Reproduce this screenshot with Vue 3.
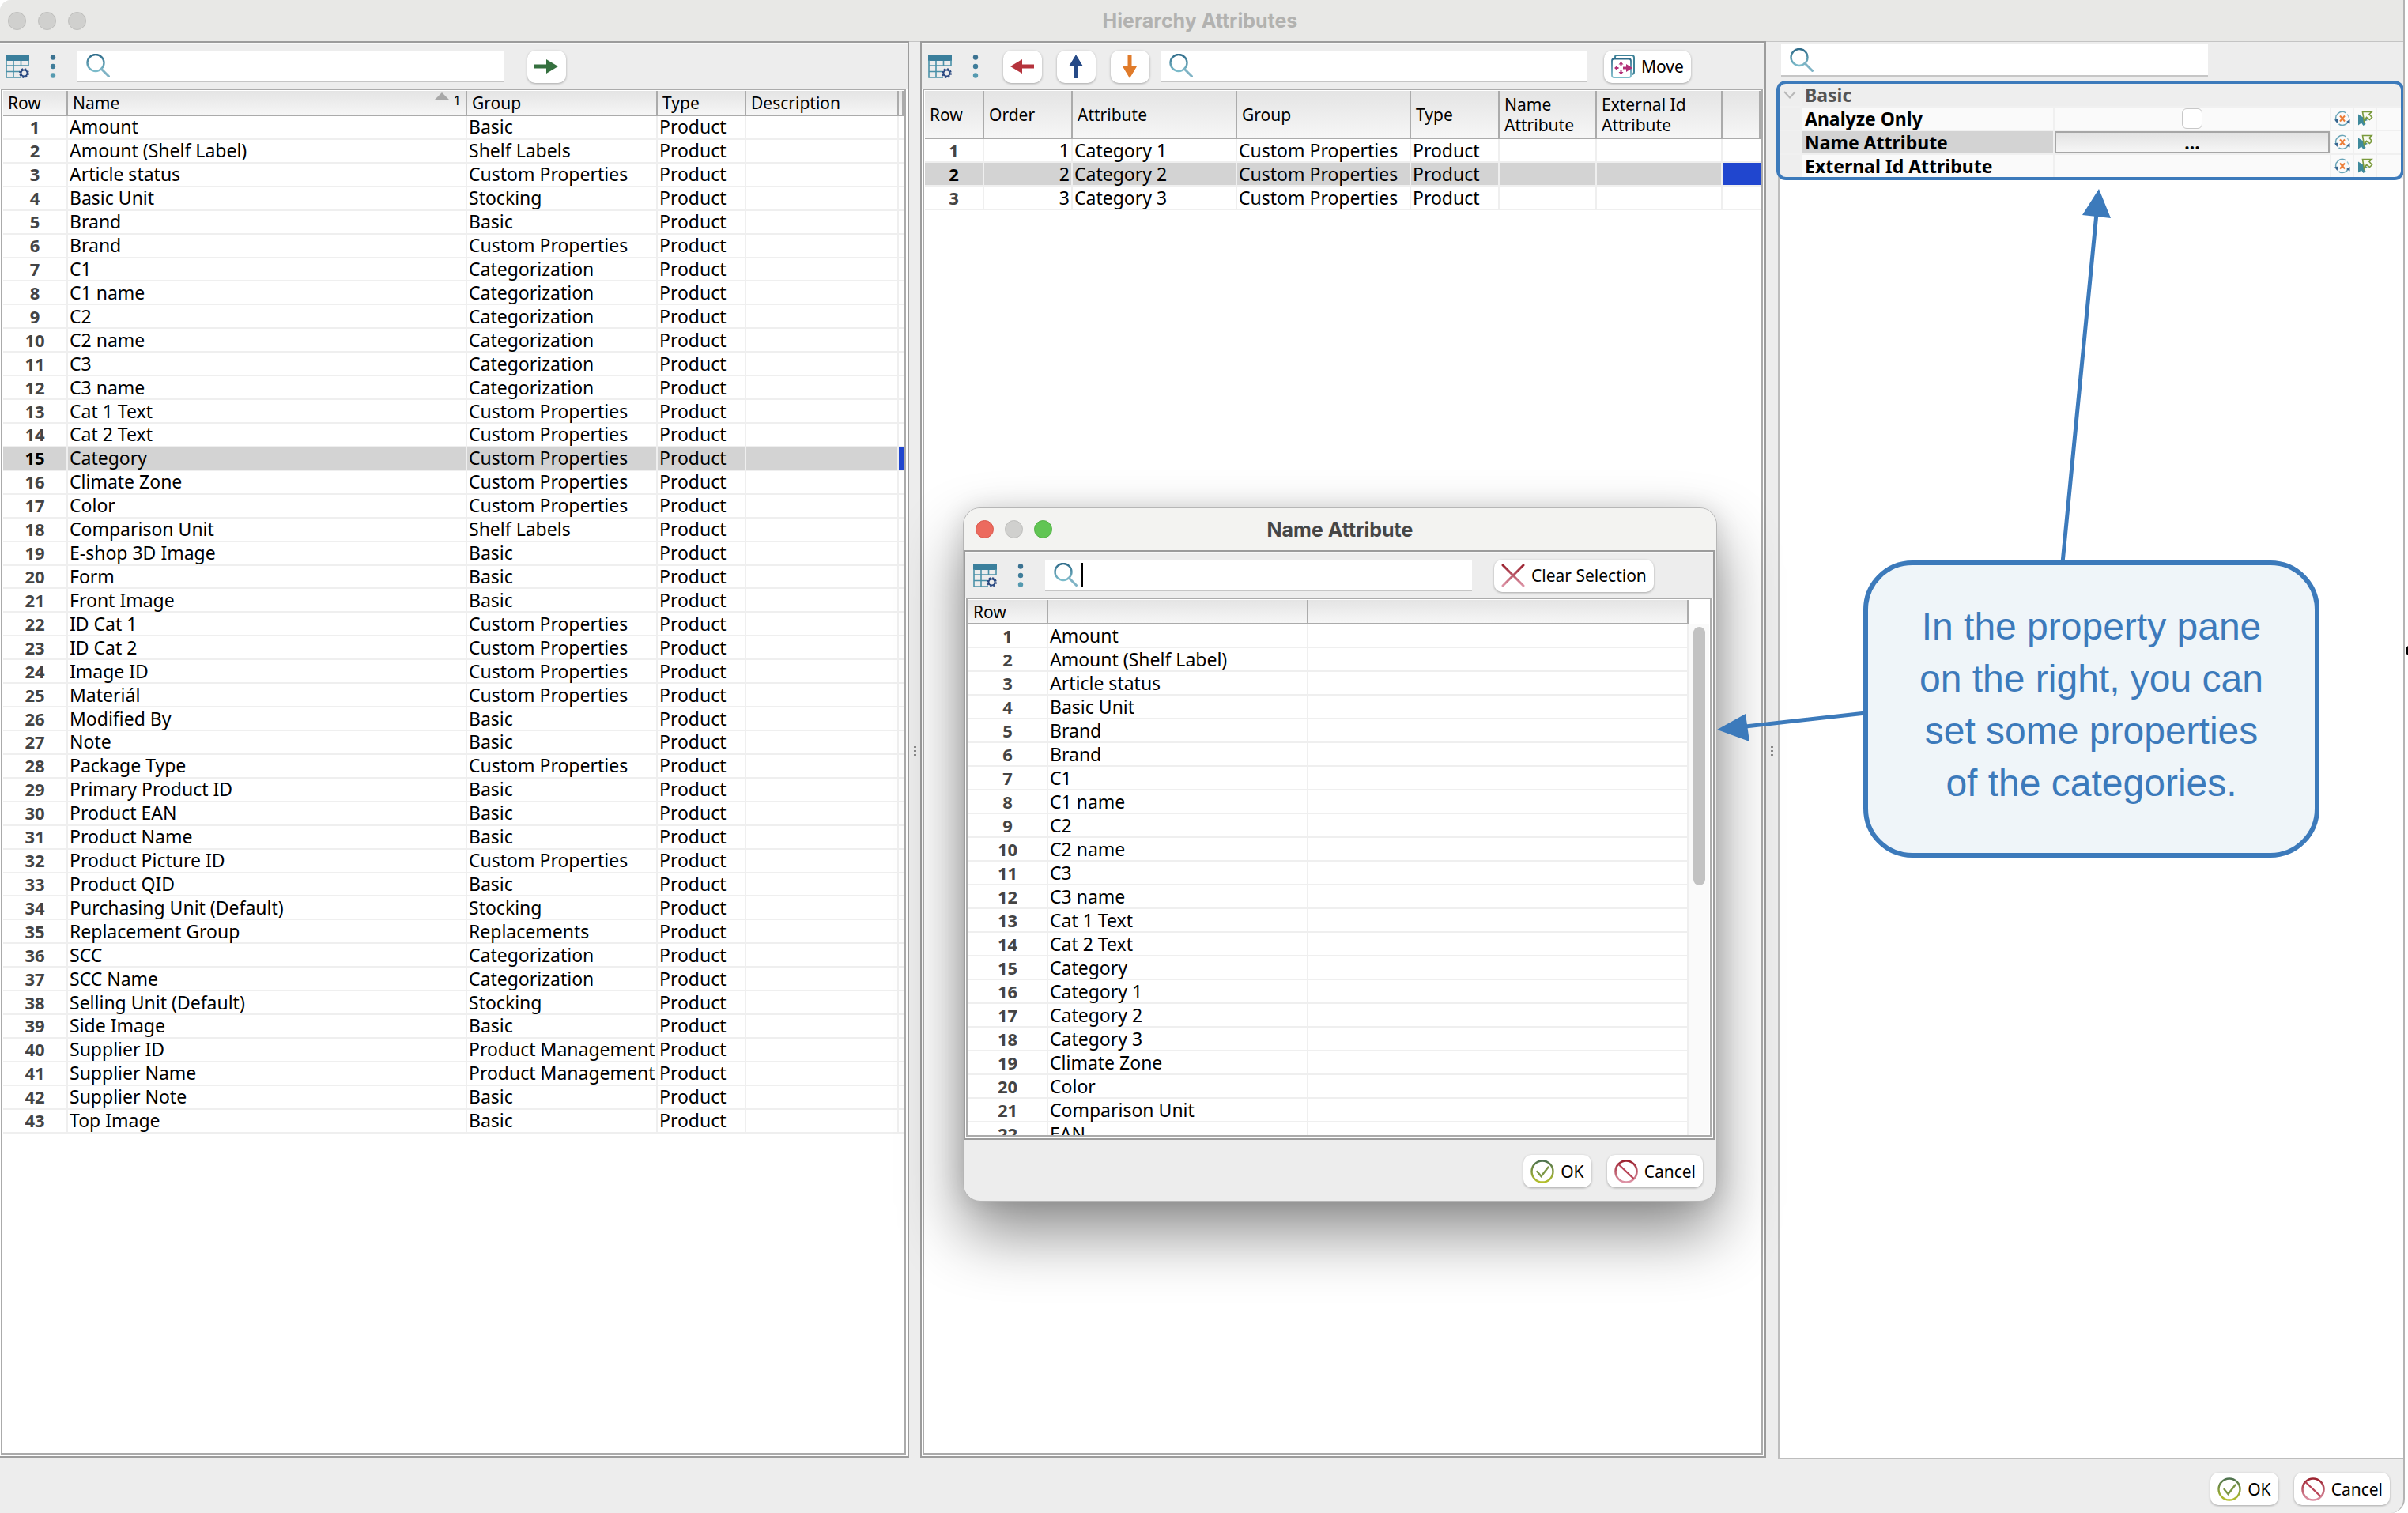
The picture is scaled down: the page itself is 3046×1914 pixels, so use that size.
<script setup>
import { ref } from "vue";

const P = "Product";
const attributes = [
  ["Amount", "Basic"],
  ["Amount (Shelf Label)", "Shelf Labels"],
  ["Article status", "Custom Properties"],
  ["Basic Unit", "Stocking"],
  ["Brand", "Basic"],
  ["Brand", "Custom Properties"],
  ["C1", "Categorization"],
  ["C1 name", "Categorization"],
  ["C2", "Categorization"],
  ["C2 name", "Categorization"],
  ["C3", "Categorization"],
  ["C3 name", "Categorization"],
  ["Cat 1 Text", "Custom Properties"],
  ["Cat 2 Text", "Custom Properties"],
  ["Category", "Custom Properties"],
  ["Climate Zone", "Custom Properties"],
  ["Color", "Custom Properties"],
  ["Comparison Unit", "Shelf Labels"],
  ["E-shop 3D Image", "Basic"],
  ["Form", "Basic"],
  ["Front Image", "Basic"],
  ["ID Cat 1", "Custom Properties"],
  ["ID Cat 2", "Custom Properties"],
  ["Image ID", "Custom Properties"],
  ["Materiál", "Custom Properties"],
  ["Modified By", "Basic"],
  ["Note", "Basic"],
  ["Package Type", "Custom Properties"],
  ["Primary Product ID", "Basic"],
  ["Product EAN", "Basic"],
  ["Product Name", "Basic"],
  ["Product Picture ID", "Custom Properties"],
  ["Product QID", "Basic"],
  ["Purchasing Unit (Default)", "Stocking"],
  ["Replacement Group", "Replacements"],
  ["SCC", "Categorization"],
  ["SCC Name", "Categorization"],
  ["Selling Unit (Default)", "Stocking"],
  ["Side Image", "Basic"],
  ["Supplier ID", "Product Management"],
  ["Supplier Name", "Product Management"],
  ["Supplier Note", "Basic"],
  ["Top Image", "Basic"],
];

const categories = ["Category 1", "Category 2", "Category 3"];

const choices = [
  "Amount",
  "Amount (Shelf Label)",
  "Article status",
  "Basic Unit",
  "Brand",
  "Brand",
  "C1",
  "C1 name",
  "C2",
  "C2 name",
  "C3",
  "C3 name",
  "Cat 1 Text",
  "Cat 2 Text",
  "Category",
  "Category 1",
  "Category 2",
  "Category 3",
  "Climate Zone",
  "Color",
  "Comparison Unit",
  "EAN",
];

const selectedAttribute = ref(14);
const selectedCategory = ref(1);
const analyzeOnly = ref(false);
</script>

<template>
  <svg class="sprite" aria-hidden="true">
    <defs>
      <linearGradient id="g-teal" x1="0" y1="0" x2="0" y2="1">
        <stop offset="0" stop-color="#2f6c8a" />
        <stop offset="1" stop-color="#7dbccb" />
      </linearGradient>
      <linearGradient id="g-green" x1="0" y1="0" x2="0" y2="1">
        <stop offset="0" stop-color="#4f7350" />
        <stop offset="1" stop-color="#b4bf2c" />
      </linearGradient>
      <linearGradient id="g-red" x1="0" y1="0" x2="0" y2="1">
        <stop offset="0" stop-color="#9c2330" />
        <stop offset="1" stop-color="#dd93a6" />
      </linearGradient>
    </defs>
    <symbol id="i-table" viewBox="0 0 30 30">
      <path d="M0 0H30V8H0Z" fill="#3b7f9c" />
      <path d="M1 7V29H19M1 14H29V7M1 21.500H18M10 8V29M19.500 8V15" fill="none" stroke="#4b91a8" stroke-width="1.600" />
      <circle cx="23.500" cy="23.500" r="4" fill="#ededed" stroke="#2b4a82" stroke-width="2" />
      <circle cx="23.500" cy="23.500" r="5.500" fill="none" stroke="#2b4a82" stroke-width="1.800" stroke-dasharray="2.200 2.120" />
    </symbol>
    <symbol id="i-dots" viewBox="0 0 14 30">
      <circle cx="7" cy="3.500" r="3.200" fill="#3b7291" />
      <circle cx="7" cy="15" r="3.200" fill="#3f7d9a" />
      <circle cx="7" cy="26.500" r="3.200" fill="#559ab0" />
    </symbol>
    <symbol id="i-search" viewBox="0 0 30 30">
      <circle cx="12" cy="11.500" r="10.500" fill="none" stroke="url(#g-teal)" stroke-width="2.400" />
      <path d="M19 19L28.500 28.500" stroke="#7fb3c5" stroke-width="3" stroke-linecap="round" />
    </symbol>
    <symbol id="i-arrow" viewBox="0 0 30 30">
      <path d="M0 12.500H15V6L30 15L15 24V17.500H0Z" />
    </symbol>
    <symbol id="i-move" viewBox="0 0 30 30">
      <path d="M5 5V3Q5 1 7 1H26Q29 1 29 4V22Q29 25 26 25" fill="none" stroke="#3f8399" stroke-width="2" />
      <rect x="1" y="5.500" width="24" height="23.500" rx="2.500" fill="#fff" stroke="url(#g-teal)" stroke-width="1.800" />
      <path d="M15 15.500H19V12L27 17L19 22V18.500H15Z M12.500 9L15.500 12.500H13.500V14.500H11.500V12.500H9.500Z M4 17L7.500 14V16H9.500V18H7.500V20Z M12.500 25.500L9.500 22H11.500V20H13.500V22H15.500Z" fill="#b23078" />
    </symbol>
    <symbol id="i-cross" viewBox="0 0 30 30">
      <path d="M2 2L28 28M28 2L2 28" fill="none" stroke="url(#g-red)" stroke-width="3" stroke-linecap="round" />
    </symbol>
    <symbol id="i-ok" viewBox="0 0 30 30">
      <circle cx="15" cy="15" r="13.500" fill="none" stroke="url(#g-green)" stroke-width="2.400" />
      <path d="M8.500 15L13.500 21L22.500 9.500" fill="none" stroke="#7c9645" stroke-width="2.400" stroke-linecap="round" />
    </symbol>
    <symbol id="i-cancel" viewBox="0 0 30 30">
      <circle cx="15" cy="15" r="13.500" fill="none" stroke="url(#g-red)" stroke-width="2.600" />
      <path d="M5.500 6L24.500 24" stroke="#b84356" stroke-width="2.400" />
    </symbol>
    <symbol id="i-reset" viewBox="0 0 20 20">
      <path d="M2.500 13A8.200 8.200 0 0 1 14.500 2.800" fill="none" stroke="#6aa5b8" stroke-width="1.500" />
      <path d="M5.500 17A8.200 8.200 0 0 0 17.500 13.500" fill="none" stroke="#6aa5b8" stroke-width="1.500" />
      <path d="M16 4.500A8.200 8.200 0 0 1 18.200 9" fill="none" stroke="#9cc3cf" stroke-width="1.200" />
      <path d="M0 11.500L5 10.500L3.500 16ZM15 14L19.500 11L19.500 16.500Z" fill="#35658f" />
      <path d="M7 6.500L13 13.500M13 6.500L7 13.500" stroke="#ec7d37" stroke-width="2" />
    </symbol>
    <symbol id="i-inherit" viewBox="0 0 20 20">
      <path d="M1 4.500V18.500L5 15.500L7.500 19L10.500 17L9 13.500L13 12Z" fill="#3f8a9c" />
      <path d="M6.500 1.500H18L15 4.500L18.500 8.500L15.500 11.500L11.500 8.500L8.500 13.500Z" fill="#f8faf0" stroke="#7a9a3c" stroke-width="1.600" />
    </symbol>
  </svg>

  <main class="app">
    <section class="window">
      <header class="titlebar">
        <span class="lights"><i></i><i></i><i></i></span>
        <h1>Hierarchy Attributes</h1>
      </header>

      <div class="panes">
        <section class="pane pane--first">
          <div class="toolbar">
            <button class="tool" aria-label="Table settings"><svg><use href="#i-table" /></svg></button>
            <button class="tool tool--dots" aria-label="More"><svg><use href="#i-dots" /></svg></button>
            <label class="search">
              <svg><use href="#i-search" /></svg>
              <input type="text" aria-label="Search attributes" />
            </label>
            <button class="btn btn--icon btn--add" aria-label="Add"><svg class="green"><use href="#i-arrow" /></svg></button>
          </div>
          <div class="box">
            <table class="grid grid--attributes">
              <colgroup>
                <col class="w-row" /><col class="w-name" /><col class="w-group" /><col class="w-type" /><col class="w-desc" /><col />
              </colgroup>
              <thead>
                <tr>
                  <th>Row</th>
                  <th>
                    <div class="sorted">Name <span><b></b><small>1</small></span></div>
                  </th>
                  <th>Group</th>
                  <th>Type</th>
                  <th>Description</th>
                  <th></th>
                </tr>
              </thead>
              <tbody>
                <tr
                  v-for="([name, group], i) in attributes"
                  :key="i"
                  :class="{ selected: i === selectedAttribute }"
                  @click="selectedAttribute = i"
                >
                  <td class="num">{{ i + 1 }}</td>
                  <td>{{ name }}</td>
                  <td>{{ group }}</td>
                  <td>{{ P }}</td>
                  <td></td>
                  <td class="mark"></td>
                </tr>
              </tbody>
            </table>
          </div>
        </section>

        <div class="splitter"><i></i></div>

        <section class="pane">
          <div class="toolbar">
            <button class="tool" aria-label="Table settings"><svg><use href="#i-table" /></svg></button>
            <button class="tool tool--dots" aria-label="More"><svg><use href="#i-dots" /></svg></button>
            <div class="moves">
              <button class="btn btn--icon" aria-label="Remove"><svg class="red"><use href="#i-arrow" /></svg></button>
              <button class="btn btn--icon" aria-label="Move up"><svg class="blue"><use href="#i-arrow" /></svg></button>
              <button class="btn btn--icon" aria-label="Move down"><svg class="orange"><use href="#i-arrow" /></svg></button>
            </div>
            <label class="search">
              <svg><use href="#i-search" /></svg>
              <input type="text" aria-label="Search categories" />
            </label>
            <button class="btn btn--move"><svg><use href="#i-move" /></svg>Move</button>
          </div>
          <div class="box">
            <table class="grid grid--categories">
              <colgroup>
                <col class="w-row" /><col class="w-order" /><col class="w-attr" /><col class="w-group" /><col class="w-type" /><col class="w-nameattr" /><col class="w-ext" /><col />
              </colgroup>
              <thead>
                <tr>
                  <th>Row</th>
                  <th>Order</th>
                  <th>Attribute</th>
                  <th>Group</th>
                  <th>Type</th>
                  <th>Name<br />Attribute</th>
                  <th>External Id<br />Attribute</th>
                  <th></th>
                </tr>
              </thead>
              <tbody>
                <tr
                  v-for="(name, i) in categories"
                  :key="name"
                  :class="{ selected: i === selectedCategory }"
                  @click="selectedCategory = i"
                >
                  <td class="num">{{ i + 1 }}</td>
                  <td class="order">{{ i + 1 }}</td>
                  <td>{{ name }}</td>
                  <td>Custom Properties</td>
                  <td>{{ P }}</td>
                  <td></td>
                  <td></td>
                  <td class="mark"></td>
                </tr>
              </tbody>
            </table>
          </div>
        </section>

        <div class="splitter"><i></i></div>

        <section class="props">
          <label class="search">
            <svg><use href="#i-search" /></svg>
            <input type="text" aria-label="Search properties" />
          </label>
          <div class="props__body">
            <table class="props__table">
              <colgroup>
                <col class="w-gutter" /><col class="w-prop" /><col class="w-value" /><col class="w-act" /><col class="w-act" /><col />
              </colgroup>
              <tbody>
                <tr class="props__group">
                  <td>
                    <svg class="chevron" viewBox="0 0 16 10"><path d="M1 1L8 8.500L15 1" /></svg>
                  </td>
                  <th colspan="5">Basic</th>
                </tr>
                <tr>
                  <td></td>
                  <th><label for="analyze-only">Analyze Only</label></th>
                  <td class="value"><input id="analyze-only" v-model="analyzeOnly" type="checkbox" /></td>
                  <td><button class="act" aria-label="Reset"><svg><use href="#i-reset" /></svg></button></td>
                  <td><button class="act" aria-label="Inherit"><svg><use href="#i-inherit" /></svg></button></td>
                  <td></td>
                </tr>
                <tr class="active">
                  <td></td>
                  <th>Name Attribute</th>
                  <td class="value"><button class="browse" aria-label="Choose name attribute">...</button></td>
                  <td><button class="act" aria-label="Reset"><svg><use href="#i-reset" /></svg></button></td>
                  <td><button class="act" aria-label="Inherit"><svg><use href="#i-inherit" /></svg></button></td>
                  <td></td>
                </tr>
                <tr>
                  <td></td>
                  <th>External Id Attribute</th>
                  <td></td>
                  <td><button class="act" aria-label="Reset"><svg><use href="#i-reset" /></svg></button></td>
                  <td><button class="act" aria-label="Inherit"><svg><use href="#i-inherit" /></svg></button></td>
                  <td></td>
                </tr>
              </tbody>
            </table>
            <div class="highlight"></div>
          </div>
        </section>
      </div>

      <footer class="actions">
        <button class="btn"><svg><use href="#i-ok" /></svg>OK</button>
        <button class="btn"><svg><use href="#i-cancel" /></svg>Cancel</button>
      </footer>
    </section>

    <section class="dialog" role="dialog" aria-labelledby="dialog-title">
      <header class="titlebar">
        <span class="lights"><i></i><i></i><i></i></span>
        <h2 id="dialog-title">Name Attribute</h2>
      </header>
      <div class="pane pane--dialog">
        <div class="toolbar">
          <button class="tool" aria-label="Table settings"><svg><use href="#i-table" /></svg></button>
          <button class="tool tool--dots" aria-label="More"><svg><use href="#i-dots" /></svg></button>
          <label class="search">
            <svg><use href="#i-search" /></svg>
            <span class="caret"></span>
            <input type="text" aria-label="Search values" />
          </label>
          <button class="btn btn--clear"><svg><use href="#i-cross" /></svg>Clear Selection</button>
        </div>
        <div class="box box--scroll">
          <table class="grid grid--choices">
            <colgroup>
              <col class="w-row" /><col class="w-choice" /><col />
            </colgroup>
            <thead>
              <tr>
                <th>Row</th>
                <th></th>
                <th></th>
              </tr>
            </thead>
            <tbody>
              <tr v-for="(name, i) in choices" :key="i">
                <td class="num">{{ i + 1 }}</td>
                <td>{{ name }}</td>
                <td></td>
              </tr>
            </tbody>
          </table>
          <div class="scroll"><span></span></div>
        </div>
      </div>
      <footer class="actions">
        <button class="btn"><svg><use href="#i-ok" /></svg>OK</button>
        <button class="btn"><svg><use href="#i-cancel" /></svg>Cancel</button>
      </footer>
    </section>

    <svg class="arrows" aria-hidden="true">
      <path d="M2609 712L2652 270M2360 902L2208 919" />
      <path class="head" d="M2655 239L2634 272L2670 276ZM2172 923L2208 903L2213 938Z" />
      <path class="speck" d="M3046 817Q3043 819 3043 823Q3043 827 3046 829Z" />
    </svg>
    <aside class="callout">
      In the property pane<br />on the right, you can<br />set some properties<br />of the categories.
    </aside>
  </main>
</template>

<style>
body {
  margin: 0;
  background: #fff;
}
</style>

<style scoped>
.sprite {
  position: absolute;
  width: 0;
  height: 0;
}

.app {
  position: relative;
  min-height: 100vh;
  box-sizing: border-box;
  padding-right: 4px;
  display: flex;
  overflow: hidden;
  color: #000;
  font: 21px/26px "Noto Sans", "Open Sans", sans-serif;
}
.app *,
.app *::before {
  box-sizing: border-box;
}

.window {
  flex: 1;
  display: flex;
  flex-direction: column;
  background: #ededed;
  border-right: 2px solid #b4b4b4;
  border-radius: 14px 0 18px 0;
  overflow: hidden;
}

.titlebar {
  position: relative;
  height: 52px;
  display: flex;
  align-items: center;
  justify-content: center;
  padding-right: 4px;
  background: #e8e8e6;
}
.titlebar h1,
.titlebar h2 {
  margin: 0;
  font: 700 25px/30px Inter, sans-serif;
  color: #b2b2b0;
}
.lights {
  position: absolute;
  left: 10px;
  display: flex;
  gap: 15px;
}
.lights i {
  width: 23px;
  height: 23px;
  border: 1px solid #bebebc;
  border-radius: 50%;
  background: #d0d0ce;
}

.panes {
  flex: 1;
  display: grid;
  grid-template-columns: 1150fr 14px 1070fr 15px 791fr;
}

.pane {
  display: flex;
  flex-direction: column;
  min-width: 0;
  border: 2px solid #9c9c9c;
  background: #fff;
  margin-bottom: 2px;
}
.pane--first {
  border-left: 0;
}

.splitter {
  display: flex;
  align-items: center;
  justify-content: center;
  border-top: 1px solid #c4c4c4;
}
.splitter i {
  width: 3px;
  height: 12px;
  background: repeating-linear-gradient(#8a8a8a 0 2px, transparent 2px 5px);
}

.toolbar {
  height: 58px;
  display: flex;
  align-items: center;
  padding-left: 8px;
  background: #ededed;
  border-top: 2px solid #f8f8f8;
}
.pane--first .toolbar {
  padding-left: 7px;
}
.pane--dialog .toolbar {
  padding-left: 10px;
}
button {
  padding: 0;
  border: 0;
  background: none;
  color: inherit;
  font: inherit;
}
.tool {
  width: 30px;
  height: 30px;
}
.tool--dots {
  width: 14px;
  margin: 0 24px 0 23px;
}
.tool svg {
  display: block;
  width: 100%;
  height: 100%;
}

.search {
  width: 540px;
  height: 40px;
  display: flex;
  align-items: center;
  padding-left: 11px;
  background: #fff;
  border-bottom: 2px solid #c6c6c6;
}
.search svg {
  width: 30px;
  height: 30px;
  flex: none;
}
.search input {
  flex: 1;
  min-width: 0;
  border: 0;
  outline: 0;
  background: none;
  font: inherit;
}
.caret {
  width: 2px;
  height: 30px;
  margin-left: 5px;
  background: #000;
}

.btn {
  height: 41px;
  display: flex;
  align-items: center;
  gap: 8px;
  padding: 0 9px;
  border-radius: 10px;
  background: #fff;
  box-shadow: 0 1px 3px rgba(0, 0, 0, 0.3);
  white-space: nowrap;
}
.btn svg {
  width: 30px;
  height: 30px;
}
.btn--icon {
  width: 49px;
}
.btn--add {
  margin-left: 29px;
}
.btn--move {
  margin-left: 21px;
}
.btn--clear {
  margin-left: 28px;
}
.moves {
  display: flex;
  gap: 19px;
  margin: 0 14px 0 4px;
}
.green {
  fill: #35703f;
}
.red {
  fill: #b5333c;
  transform: rotate(180deg);
}
.blue {
  fill: #264a87;
  transform: rotate(-90deg);
}
.orange {
  fill: #e07b2a;
  transform: rotate(90deg);
}

.box {
  flex: 1;
  margin: 0 2px 2px 1px;
  padding: 1px;
  border: 2px solid #ababab;
  background: #fff;
}

.grid {
  width: 100%;
  table-layout: fixed;
  border-spacing: 0;
}
/* header plus 43 rows, shared out evenly */
.grid--attributes {
  height: 1319px;
}
.grid th {
  height: 32px;
  padding: 0 6px;
  border-right: 2px solid #ababab;
  border-bottom: 2px solid #ababab;
  background: linear-gradient(#e4e4e4, #f6f6f6);
  font-weight: 400;
  text-align: left;
}
.grid td {
  height: 30px;
  padding: 0 2px;
  border-right: 2px solid #efefef;
  border-bottom: 2px solid #efefef;
  font-size: 23px;
  line-height: 27px;
  white-space: nowrap;
}
.grid--attributes td {
  height: 29px;
}
.grid td:last-child {
  border-right: 0;
}
.grid .num {
  color: #444;
  font-weight: 700;
  text-align: center;
  font-size: 22px;
}
.grid .order {
  text-align: right;
}
.grid .selected td {
  background: #d3d3d3;
}
.grid .selected .num {
  color: #000;
}
.grid .selected .mark {
  background: #2046cf;
}
.grid--categories th {
  height: 61px;
}
.grid--choices th {
  height: 31px;
}

.sorted {
  display: flex;
  justify-content: space-between;
}
.sorted span {
  display: flex;
  gap: 6px;
}
.sorted b {
  border: 9px solid transparent;
  border-top: 0;
  border-bottom: 9px solid #a8a8a8;
  align-self: flex-start;
}
.sorted small {
  font-size: 16px;
  line-height: 20px;
}

.grid--attributes .w-row {
  width: 82px;
}
.w-name {
  width: 505px;
}
.grid--attributes .w-group {
  width: 241px;
}
.w-type {
  width: 112px;
}
.w-desc {
  width: 193px;
}
.grid--categories .w-row {
  width: 75px;
}
.w-order {
  width: 112px;
}
.w-attr {
  width: 208px;
}
.grid--categories .w-group {
  width: 220px;
}
.w-nameattr {
  width: 123px;
}
.w-ext {
  width: 159px;
}
.grid--choices .w-row {
  width: 101px;
}
.w-choice {
  width: 329px;
}

.props {
  display: flex;
  flex-direction: column;
  min-width: 0;
  padding-top: 3px;
  border-top: 1px solid #c4c4c4;
}
.props > .search {
  height: 41px;
  margin: 0 0 9px 4px;
}
.props__body {
  position: relative;
  flex: 1;
  background: #fff;
  border: solid #bdbdbd;
  border-width: 0 0 2px 2px;
}
.props__table {
  width: 100%;
  table-layout: fixed;
  border-spacing: 0;
}
.props__table td,
.props__table th {
  height: 30px;
  padding: 0;
  border-right: 2px solid #f0f0f0;
  border-bottom: 2px solid #f0f0f0;
  background: #fafafa;
  line-height: 27px;
}
.props__table th {
  padding-left: 4px;
  font-size: 23px;
  font-weight: 700;
  text-align: left;
  white-space: nowrap;
}
.props__table td:first-child,
.props__table .props__group th {
  background: #eee;
}
.props__table .props__group th {
  color: #555;
}
.props__table .active th {
  background: #d3d3d3;
}
.props__table .value {
  text-align: center;
}
.w-gutter {
  width: 28px;
}
.w-prop {
  width: 320px;
}
.w-value {
  width: 350px;
}
.w-act {
  width: 29px;
}
.chevron {
  display: block;
  width: 16px;
  height: 10px;
  margin: 0 auto;
  fill: none;
  stroke: #b8b8b8;
  stroke-width: 2;
}
.value input {
  appearance: none;
  display: block;
  width: 26px;
  height: 26px;
  margin: 0 auto;
  border: 1px solid #c8c8c8;
  border-radius: 6px;
  background: #fff;
}
.browse {
  display: block;
  width: 100%;
  height: 28px;
  border: 2px solid #a6a6a6;
  background: linear-gradient(#e2e2e2, #f6f6f6);
  font-size: 23px;
  font-weight: 700;
  line-height: 20px;
}
.act {
  display: block;
  width: 20px;
  height: 20px;
  margin: 0 auto;
}
.act svg {
  display: block;
  width: 20px;
  height: 20px;
}
.highlight {
  position: absolute;
  top: -4px;
  left: -4px;
  right: -1px;
  height: 126px;
  border: 4px solid #3c7abb;
  border-radius: 12px;
  pointer-events: none;
}

.actions {
  display: flex;
  justify-content: flex-end;
  gap: 20px;
  padding: 17px 17px 10px;
}

.dialog {
  position: absolute;
  left: 1218px;
  top: 642px;
  width: 954px;
  height: 878px;
  display: flex;
  flex-direction: column;
  border: 1px solid #b6b6b6;
  border-radius: 22px;
  background: #ededed;
  box-shadow: 0 40px 80px rgba(0, 0, 0, 0.45), 0 0 30px rgba(0, 0, 0, 0.12);
  overflow: hidden;
}
.dialog .titlebar {
  height: 53px;
  padding-right: 0;
  background: #f3f3f1;
}
.dialog .titlebar h2 {
  color: #464646;
}
.dialog .lights {
  left: 15px;
  gap: 14px;
}
.dialog .lights i:first-child {
  background: #ec6a5e;
  border-color: #d9574c;
}
.dialog .lights i:last-child {
  background: #61c554;
  border-color: #52b045;
}
.pane--dialog {
  flex: 1;
  min-height: 0;
  margin: 0 2px 2px 0;
}
.box--scroll {
  display: flex;
  min-height: 0;
  overflow: hidden;
}
.box--scroll .grid {
  flex: 1;
  align-self: flex-start;
}
.box--scroll td:last-child {
  border-right: 2px solid #efefef;
}
.scroll {
  width: 26px;
  padding: 34px 0 0 6px;
  background: linear-gradient(#fff 31px, #fafafa 31px);
}
.scroll span {
  display: block;
  width: 15px;
  height: 327px;
  border-radius: 8px;
  background: #c2c2c2;
}
.dialog .actions {
  padding: 17px 17px 17px;
}

.arrows {
  position: absolute;
  left: 0;
  top: 0;
  width: 100%;
  height: 100%;
  fill: none;
  stroke: #3c7abb;
  stroke-width: 5;
  pointer-events: none;
}
.arrows .head {
  fill: #3c7abb;
  stroke: none;
}
.arrows .speck {
  fill: #000;
  stroke: none;
}
.callout {
  position: absolute;
  left: 2357px;
  top: 709px;
  width: 577px;
  padding: 45px 20px 55px;
  border: 6px solid #3c7abb;
  border-radius: 62px;
  background: #eff5f9;
  color: #3c7abb;
  font: 48px/66px "Liberation Sans", Arial, sans-serif;
  text-align: center;
}
</style>
